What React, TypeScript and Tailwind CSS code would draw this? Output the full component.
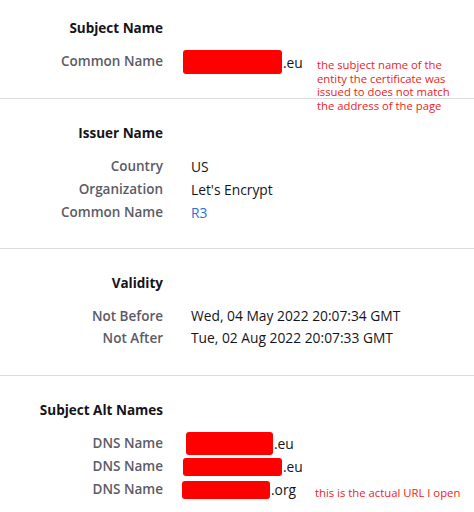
import React from 'react';

type Row = { label: string; value: React.ReactNode };

function Redacted({ w, h, ml }: { w: number; h: number; ml: number }) {
  return (
    <span
      className="inline-block bg-[#ff0000] rounded-[3px] align-middle"
      style={{ width: w, height: h, marginLeft: ml }}
    />
  );
}

function Section({
  title,
  rows,
  first = false,
  last = false,
  rowHeight = 'leading-[23px]',
  pad = 'pb-6',
}: {
  title: string;
  rows: Row[];
  first?: boolean;
  last?: boolean;
  rowHeight?: string;
  pad?: string;
}) {
  return (
    <section
      className={`${first ? 'pt-[18px]' : 'pt-6'} ${last ? 'pb-4' : `${pad} border-b border-[#dcdce0]`}`}
    >
      <div className="grid grid-cols-[163px_1fr] gap-x-[28px]">
        <h2 className="text-right text-[13.5px] leading-5 font-bold text-[#15141a] mb-3">{title}</h2>
        <div />
        {rows.map((r, i) => (
          <React.Fragment key={i}>
            <div className={`text-right text-[13.5px] ${rowHeight} font-semibold text-[#5b5b66]`}>
              {r.label}
            </div>
            <div className={`flex items-center text-[13.8px] ${rowHeight} text-[#15141a]`}>{r.value}</div>
          </React.Fragment>
        ))}
      </div>
    </section>
  );
}

export default function App() {
  return (
    <div
      className="relative w-[474px] h-[512px] bg-white overflow-hidden"
      style={{ fontFamily: '"Open Sans", "Noto Sans", sans-serif' }}
    >
      <Section
        first
        title="Subject Name"
        rows={[
          {
            label: 'Common Name',
            value: (
              <>
                <Redacted w={99} h={24} ml={-8} />
                <span className="ml-px">.eu</span>
              </>
            ),
          },
        ]}
      />
      <Section
        title="Issuer Name"
        rows={[
          { label: 'Country', value: 'US' },
          { label: 'Organization', value: "Let's Encrypt" },
          { label: 'Common Name', value: <span className="text-[#2e6ed6]">R3</span> },
        ]}
      />
      <Section
        title="Validity"
        rowHeight="leading-[22px]"
        pad="pb-[26px]"
        rows={[
          { label: 'Not Before', value: 'Wed, 04 May 2022 20:07:34 GMT' },
          { label: 'Not After', value: 'Tue, 02 Aug 2022 20:07:33 GMT' },
        ]}
      />
      <Section
        last
        title="Subject Alt Names"
        rows={[
          {
            label: 'DNS Name',
            value: (
              <>
                <Redacted w={87} h={23} ml={-5} />
                <span className="ml-px">.eu</span>
              </>
            ),
          },
          {
            label: 'DNS Name',
            value: (
              <>
                <Redacted w={99} h={18} ml={-8} />
                <span className="ml-px">.eu</span>
              </>
            ),
          },
          {
            label: 'DNS Name',
            value: (
              <>
                <Redacted w={88} h={18} ml={-9} />
                <span className="ml-px">.org</span>
              </>
            ),
          },
        ]}
      />

      <p className="absolute left-[317px] top-[58px] w-[150px] text-[11.3px] leading-[13.5px] text-[#ee1c1c]">
        the subject name of the entity the certificate was issued to does not match the address of the page
      </p>
      <p className="absolute left-[315px] top-[486px] text-[11.3px] leading-[14px] text-[#ee1c1c] whitespace-nowrap">
        this is the actual URL I open
      </p>
    </div>
  );
}
